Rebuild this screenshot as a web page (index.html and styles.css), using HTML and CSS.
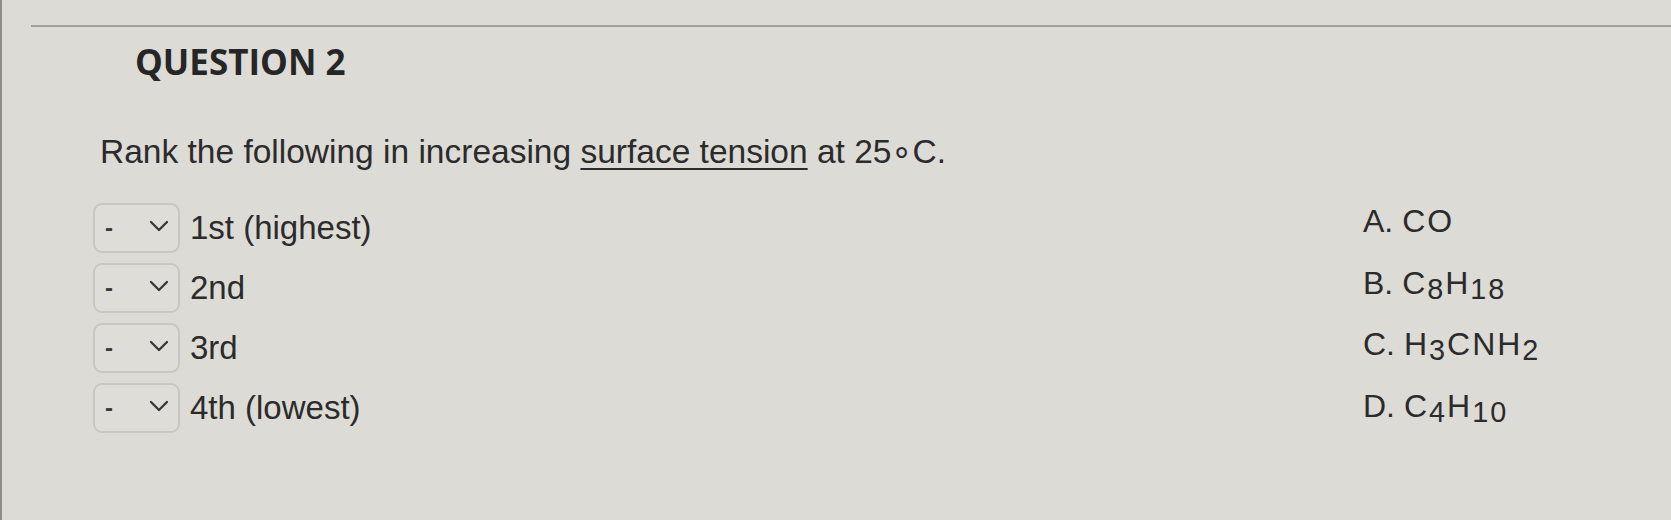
FILE: index.html
```html
<!DOCTYPE html>
<html lang="en">
<head>
<meta charset="utf-8">
<title>Question 2</title>
<link rel="stylesheet" href="styles.css">
</head>
<body>
<div class="page">
  <div class="rule"></div>
  <h2 class="q-title">QUESTION 2</h2>
  <p class="q-text">Rank the following in increasing <u class="key">surface tension</u> at 25∘C.</p>
  <div class="q-grid">
    <div class="ranks">
      <div class="rank-row">
        <div class="select"><span class="dash">-</span><svg class="chev" viewBox="0 0 20 12" width="20" height="12"><path d="M2 2 L10 10 L18 2" fill="none" stroke="#333" stroke-width="2.2" stroke-linecap="round" stroke-linejoin="round"/></svg></div>
        <span class="rank-label">1st (highest)</span>
      </div>
      <div class="rank-row">
        <div class="select"><span class="dash">-</span><svg class="chev" viewBox="0 0 20 12" width="20" height="12"><path d="M2 2 L10 10 L18 2" fill="none" stroke="#333" stroke-width="2.2" stroke-linecap="round" stroke-linejoin="round"/></svg></div>
        <span class="rank-label">2nd</span>
      </div>
      <div class="rank-row">
        <div class="select"><span class="dash">-</span><svg class="chev" viewBox="0 0 20 12" width="20" height="12"><path d="M2 2 L10 10 L18 2" fill="none" stroke="#333" stroke-width="2.2" stroke-linecap="round" stroke-linejoin="round"/></svg></div>
        <span class="rank-label">3rd</span>
      </div>
      <div class="rank-row">
        <div class="select"><span class="dash">-</span><svg class="chev" viewBox="0 0 20 12" width="20" height="12"><path d="M2 2 L10 10 L18 2" fill="none" stroke="#333" stroke-width="2.2" stroke-linecap="round" stroke-linejoin="round"/></svg></div>
        <span class="rank-label">4th (lowest)</span>
      </div>
    </div>
    <ol class="options">
      <li><span class="opt-key">A.</span> <span class="formula">CO</span></li>
      <li><span class="opt-key">B.</span> <span class="formula">C<sub>8</sub>H<sub>18</sub></span></li>
      <li><span class="opt-key">C.</span> <span class="formula">H<sub>3</sub>CNH<sub>2</sub></span></li>
      <li><span class="opt-key">D.</span> <span class="formula">C<sub>4</sub>H<sub>10</sub></span></li>
    </ol>
  </div>
</div>
</body>
</html>
```

FILE: styles.css
```css
html, body {
  margin: 0;
  padding: 0;
}
body {
  width: 1671px;
  height: 520px;
  overflow: hidden;
  background: #dddbd6;
  color: #2b2b2b;
  font-family: "Liberation Sans", Arial, sans-serif;
  border-left: 2px solid #8f8d89;
  box-sizing: border-box;
}
.page {
  padding-top: 25px;
  padding-left: 29px;
}
.rule {
  height: 2px;
  background: #a19f9b;
}
.q-title {
  margin: 17px 0 0 104px;
  font-family: "Open Sans", "Liberation Sans", sans-serif;
  font-weight: 700;
  font-size: 35px;
  line-height: 35px;
  color: #262626;
}
.q-text {
  margin: 57px 0 0 69px;
  font-size: 33.5px;
  line-height: 32px;
}
.key {
  text-decoration-thickness: 2px;
  text-underline-offset: 5px;
}
.q-grid {
  display: grid;
  grid-template-columns: 1fr 308px;
  margin-top: 23px;
}
.ranks {
  display: flex;
  flex-direction: column;
  gap: 10px;
  padding-top: 12px;
  padding-left: 62px;
}
.rank-row {
  display: flex;
  align-items: center;
  gap: 10px;
  height: 50px;
}
.select {
  width: 87px;
  height: 50px;
  box-sizing: border-box;
  border: 2px solid #c9c7c2;
  border-radius: 9px;
  background: #dfddd8;
  display: flex;
  align-items: center;
  justify-content: space-between;
  padding: 0 9px 0 10px;
}
.dash {
  font-size: 24px;
  line-height: 1;
  font-weight: 700;
  color: #3a3a3a;
}
.chev {
  display: block;
  margin-top: -4px;
}
.rank-label {
  font-size: 33px;
  line-height: 32px;
}
.options {
  list-style: none;
  margin: 0;
  padding: 0;
  font-size: 32px;
}
.options li {
  height: 61.5px;
  line-height: 61.5px;
}
.formula {
  letter-spacing: 2px;
}
.formula sub {
  font-size: 0.9em;
  vertical-align: -0.16em;
  line-height: 0;
}
```
